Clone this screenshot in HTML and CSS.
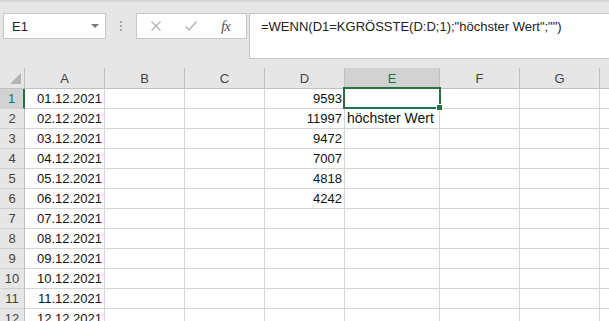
FILE: index.html
```html
<!DOCTYPE html>
<html lang="de">
<head>
<meta charset="utf-8">
<title>Excel</title>
<link rel="stylesheet" href="styles.css">
</head>
<body>
<div class="topstrip"></div>
<div class="toolbar">
  <div class="namebox">
    <span class="namebox-text">E1</span>
    <span class="namebox-arrow"></span>
  </div>
  <div class="grip"><span></span><span></span><span></span></div>
  <div class="iconbox">
    <svg class="ico" width="12" height="12" viewBox="0 0 12 12"><path d="M1.5 1.5 L10.5 10.5 M10.5 1.5 L1.5 10.5" stroke="#b3b3b3" stroke-width="1.4" fill="none"/></svg>
    <svg class="ico" width="14" height="12" viewBox="0 0 14 12"><path d="M1.5 6.5 L5 10 L12.5 1.5" stroke="#b3b3b3" stroke-width="1.5" fill="none"/></svg>
    <span class="fx">fx</span>
  </div>
  <div class="formula">=WENN(D1=KGRÖSSTE(D:D;1);"höchster Wert";"")</div>
</div>
<div class="sheet-wrap">
<div class="sheet">
  <div class="hd corner"><span class="tri"></span></div>
  <div class="hd col">A</div>
  <div class="hd col">B</div>
  <div class="hd col">C</div>
  <div class="hd col">D</div>
  <div class="hd col sel">E</div>
  <div class="hd col">F</div>
  <div class="hd col">G</div>
  <div class="hd col last"></div>

  <div class="hd row sel">1</div><div class="c r">01.12.2021</div><div class="c"></div><div class="c"></div><div class="c r">9593</div><div class="c"></div><div class="c"></div><div class="c"></div><div class="c last"></div>
  <div class="hd row">2</div><div class="c r">02.12.2021</div><div class="c"></div><div class="c"></div><div class="c r">11997</div><div class="c txt">höchster Wert</div><div class="c"></div><div class="c"></div><div class="c last"></div>
  <div class="hd row">3</div><div class="c r">03.12.2021</div><div class="c"></div><div class="c"></div><div class="c r">9472</div><div class="c"></div><div class="c"></div><div class="c"></div><div class="c last"></div>
  <div class="hd row">4</div><div class="c r">04.12.2021</div><div class="c"></div><div class="c"></div><div class="c r">7007</div><div class="c"></div><div class="c"></div><div class="c"></div><div class="c last"></div>
  <div class="hd row">5</div><div class="c r">05.12.2021</div><div class="c"></div><div class="c"></div><div class="c r">4818</div><div class="c"></div><div class="c"></div><div class="c"></div><div class="c last"></div>
  <div class="hd row">6</div><div class="c r">06.12.2021</div><div class="c"></div><div class="c"></div><div class="c r">4242</div><div class="c"></div><div class="c"></div><div class="c"></div><div class="c last"></div>
  <div class="hd row">7</div><div class="c r">07.12.2021</div><div class="c"></div><div class="c"></div><div class="c"></div><div class="c"></div><div class="c"></div><div class="c"></div><div class="c last"></div>
  <div class="hd row">8</div><div class="c r">08.12.2021</div><div class="c"></div><div class="c"></div><div class="c"></div><div class="c"></div><div class="c"></div><div class="c"></div><div class="c last"></div>
  <div class="hd row">9</div><div class="c r">09.12.2021</div><div class="c"></div><div class="c"></div><div class="c"></div><div class="c"></div><div class="c"></div><div class="c"></div><div class="c last"></div>
  <div class="hd row">10</div><div class="c r">10.12.2021</div><div class="c"></div><div class="c"></div><div class="c"></div><div class="c"></div><div class="c"></div><div class="c"></div><div class="c last"></div>
  <div class="hd row">11</div><div class="c r">11.12.2021</div><div class="c"></div><div class="c"></div><div class="c"></div><div class="c"></div><div class="c"></div><div class="c"></div><div class="c last"></div>
  <div class="hd row">12</div><div class="c r">12.12.2021</div><div class="c"></div><div class="c"></div><div class="c"></div><div class="c"></div><div class="c"></div><div class="c"></div><div class="c last"></div>
</div>
<div class="selection"><span class="handle"></span></div>
</div>
</body>
</html>
```

FILE: styles.css
```css
html, body {
  margin: 0;
  padding: 0;
  background: #ffffff;
  overflow: hidden;
  width: 609px;
  height: 321px;
}
body {
  font-family: "Liberation Sans", Arial, sans-serif;
  font-size: 13px;
  color: #111111;
}
.topstrip {
  height: 2px;
  background: #d4d4d4;
}
.toolbar {
  height: 66px;
  background: #e6e6e6;
  display: flex;
  align-items: flex-start;
  padding: 11px 0 0 3px;
  box-sizing: border-box;
  overflow: hidden;
}
.toolbar > * {
  flex-shrink: 0;
}
.namebox {
  width: 103px;
  height: 26px;
  box-sizing: border-box;
  background: #ffffff;
  border: 1px solid #c6c6c6;
  display: flex;
  align-items: center;
  justify-content: space-between;
  padding: 0 6px 0 8px;
}
.namebox-text {
  font-size: 13px;
  color: #222222;
}
.namebox-arrow {
  width: 0;
  height: 0;
  border-left: 4px solid transparent;
  border-right: 4px solid transparent;
  border-top: 4px solid #7a7a7a;
}
.grip {
  width: 30px;
  height: 26px;
  display: flex;
  flex-direction: column;
  align-items: center;
  justify-content: center;
  gap: 2px;
}
.grip span {
  width: 2px;
  height: 2px;
  background: #aaaaaa;
}
.iconbox {
  width: 111px;
  height: 26px;
  box-sizing: border-box;
  background: #ffffff;
  border: 1px solid #c6c6c6;
  display: flex;
  align-items: center;
  padding: 0 0 0 13px;
}
.ico:first-child {
  margin-right: 22px;
}
.ico:nth-child(2) {
  margin-right: 23px;
}
.fx {
  font-family: "Liberation Serif", "Times New Roman", serif;
  font-style: italic;
  font-size: 15px;
  color: #555555;
  letter-spacing: -1px;
}
.formula {
  margin-left: 2px;
  width: 400px;
  height: 46px;
  box-sizing: border-box;
  background: #ffffff;
  border: 1px solid #c6c6c6;
  padding: 4px 0 0 11px;
  line-height: 18px;
  font-size: 13px;
  color: #222222;
  white-space: nowrap;
}
.sheet-wrap {
  position: relative;
}
.sheet {
  display: grid;
  grid-template-columns: 25px 80px 80px 80px 80px 95px 80px 80px 20px;
  grid-template-rows: 21px repeat(12, 20px);
}
.hd {
  background: #e6e6e6;
  color: #444444;
  box-sizing: border-box;
  display: flex;
  align-items: center;
  justify-content: center;
  font-size: 13px;
}
.hd.col {
  border-right: 1px solid #bfbfbf;
  border-bottom: 1px solid #bfbfbf;
  padding-top: 1px;
}
.hd.col.last {
  border-right: none;
}
.hd.corner {
  border-right: 1px solid #bfbfbf;
  border-bottom: 1px solid #bfbfbf;
  position: relative;
}
.tri {
  position: absolute;
  right: 3px;
  bottom: 4px;
  width: 0;
  height: 0;
  border-left: 11px solid transparent;
  border-bottom: 11px solid #b4b4b4;
}
.hd.row {
  border-right: 1px solid #bfbfbf;
  border-bottom: 1px solid #d0d0d0;
}
.hd.sel {
  background: #d2d2d2;
  color: #217346;
}
.hd.row.sel {
  border-right: 2px solid #217346;
}
.c {
  box-sizing: border-box;
  border-right: 1px solid #d4d4d4;
  border-bottom: 1px solid #d4d4d4;
  line-height: 19px;
  padding: 0 3px;
  white-space: nowrap;
  overflow: visible;
  color: #111111;
}
.c.r {
  text-align: right;
  padding-right: 2px;
}
.c.txt {
  font-size: 14px;
  padding-left: 2px;
}
.c.last {
  border-right: none;
}
.selection {
  position: absolute;
  left: 343px;
  top: 19px;
  width: 98px;
  height: 22px;
  box-sizing: border-box;
  border: 2px solid #217346;
}
.handle {
  position: absolute;
  right: -4px;
  bottom: -4px;
  width: 5px;
  height: 5px;
  background: #217346;
  border: 1px solid #ffffff;
}
```
